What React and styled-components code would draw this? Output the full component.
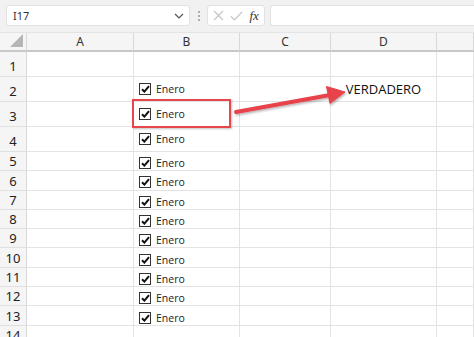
import React from "react";
import styled, { createGlobalStyle } from "styled-components";

const GlobalStyle = createGlobalStyle`
  html, body {
    margin: 0;
    padding: 0;
    background: #fff;
    overflow: hidden;
  }
  body {
    font-family: "Noto Sans", "Liberation Sans", sans-serif;
  }
`;

const Page = styled.div`
  width: 474px;
  height: 337px;
  overflow: hidden;
  position: relative;
  background: #fff;
`;

const Toolbar = styled.div`
  height: 32px;
  box-sizing: border-box;
  padding: 5px 0 6px 6px;
  display: flex;
  align-items: stretch;
  background: #f1f1f1;
`;

const NameBox = styled.div`
  width: 184px;
  box-sizing: border-box;
  background: #fff;
  border: 1px solid #e2e2e2;
  border-radius: 3px;
  display: flex;
  align-items: center;
  justify-content: space-between;
  padding: 0 5px 0 6px;
  font-size: 11px;
  color: #333;
`;

const Dots = styled.div`
  width: 17px;
  display: flex;
  flex-direction: column;
  align-items: center;
  justify-content: center;
  gap: 2px;
  span {
    width: 2px;
    height: 2px;
    background: #999;
    border-radius: 1px;
  }
`;

const FxBox = styled.div`
  width: 58px;
  box-sizing: border-box;
  background: #fff;
  border: 1px solid #e2e2e2;
  border-radius: 3px;
  display: flex;
  align-items: center;
  justify-content: space-around;
  padding: 0 2px;
`;

const FxLabel = styled.span`
  font-family: "Liberation Serif", serif;
  font-style: italic;
  font-size: 13px;
  color: #333;
`;

const FormulaInput = styled.div`
  flex: 1;
  margin-left: 5px;
  background: #fff;
  border: 1px solid #e2e2e2;
  border-right: none;
  border-radius: 3px 0 0 3px;
`;

const Sheet = styled.div`
  display: grid;
  grid-template-columns: 27px 107px 106px 91px 106px 1fr;
  grid-template-rows: 19px repeat(4, 25px) repeat(10, 19.3px);
  border-top: 1px solid #e4e4e4;
`;

const Corner = styled.div`
  background: #f5f5f5;
  border-right: 1px solid #d8d8d8;
  border-bottom: 2px solid #c8c8c8;
  position: relative;
  svg {
    position: absolute;
    right: 3px;
    bottom: 3px;
  }
`;

const ColHead = styled.div`
  background: #f5f5f5;
  border-right: 1px solid #d8d8d8;
  border-bottom: 2px solid #c8c8c8;
  display: flex;
  align-items: center;
  justify-content: center;
  font-size: 12px;
  color: #333;
`;

const RowHead = styled.div`
  background: #f5f5f5;
  border-right: 1px solid #d8d8d8;
  border-bottom: 1px solid #e0e0e0;
  display: flex;
  align-items: flex-end;
  justify-content: center;
  padding-bottom: ${(p) => (p.$tall ? "1px" : "0")};
  font-size: 13px;
  line-height: 18px;
  color: #222;
`;

const Cell = styled.div`
  border-right: 1px solid #e3e3e3;
  border-bottom: 1px solid #e3e3e3;
  display: flex;
  align-items: ${(p) => (p.$bottom ? "flex-end" : "center")};
  justify-content: ${(p) => (p.$center ? "center" : "flex-start")};
  padding-left: ${(p) => (p.$center ? "0" : "5px")};
  padding-bottom: ${(p) => (p.$bottom ? "3px" : "0")};
  padding-top: ${(p) => p.$drop || 0}px;
  box-sizing: border-box;
  font-family: "Open Sans", "Noto Sans", sans-serif;
  font-size: 13px;
  color: #111;
  min-width: 0;
  white-space: nowrap;
`;

const CheckItem = styled.div`
  display: flex;
  align-items: center;
  gap: 5px;
  font-family: "Open Sans", "Noto Sans", sans-serif;
  font-size: 10.5px;
  color: #222;
`;

const Box = styled.span`
  width: 12px;
  height: 12px;
  box-sizing: border-box;
  border: 1px solid #333;
  background: #fff;
  display: flex;
  align-items: center;
  justify-content: center;
`;

const Highlight = styled.div`
  position: absolute;
  left: 132px;
  top: 99px;
  width: 99px;
  height: 29px;
  box-sizing: border-box;
  border: 2px solid #e5474d;
  box-shadow: 1px 1px 2px rgba(0, 0, 0, 0.25);
  pointer-events: none;
`;

const ArrowLayer = styled.svg`
  position: absolute;
  left: 0;
  top: 0;
  pointer-events: none;
`;

const Check = () => (
  <svg width="9" height="8" viewBox="0 0 9 8">
    <path d="M1 4.2 L3.4 6.6 L8 1.2" fill="none" stroke="#111" strokeWidth="2" />
  </svg>
);

const Checked = () => (
  <CheckItem>
    <Box>
      <Check />
    </Box>
    Enero
  </CheckItem>
);

const cols = ["A", "B", "C", "D", ""];

export default function App() {
  const rows = Array.from({ length: 14 }, (_, i) => i + 1);
  return (
    <Page>
      <GlobalStyle />
      <Toolbar>
        <NameBox>
          <span>I17</span>
          <svg width="10" height="6" viewBox="0 0 10 6">
            <path d="M1 1 L5 5 L9 1" fill="none" stroke="#555" strokeWidth="1.2" />
          </svg>
        </NameBox>
        <Dots>
          <span />
          <span />
          <span />
        </Dots>
        <FxBox>
          <svg width="11" height="11" viewBox="0 0 11 11">
            <path d="M1 1 L10 10 M10 1 L1 10" stroke="#c4c4c4" strokeWidth="1.1" />
          </svg>
          <svg width="13" height="10" viewBox="0 0 13 10">
            <path d="M1 5.5 L4.5 9 L12 1" fill="none" stroke="#c4c4c4" strokeWidth="1.1" />
          </svg>
          <FxLabel>fx</FxLabel>
        </FxBox>
        <FormulaInput />
      </Toolbar>
      <Sheet>
        <Corner>
          <svg width="13" height="13" viewBox="0 0 13 13">
            <path d="M13 0 L13 13 L0 13 Z" fill="#b5b5b5" />
          </svg>
        </Corner>
        {cols.map((c, i) => (
          <ColHead key={i}>{c}</ColHead>
        ))}
        {rows.map((r) => (
          <React.Fragment key={r}>
            <RowHead $tall={r <= 4}>{r}</RowHead>
            <Cell />
            <Cell $drop={r >= 5 ? 4 : 0}>
              {r >= 2 && r <= 13 ? <Checked /> : null}
            </Cell>
            <Cell />
            <Cell $center $bottom={r === 2}>
              {r === 2 ? "VERDADERO" : null}
            </Cell>
            <Cell />
          </React.Fragment>
        ))}
      </Sheet>
      <Highlight />
      <ArrowLayer width="474" height="337" viewBox="0 0 474 337">
        <defs>
          <filter id="sh" x="-10%" y="-30%" width="120%" height="160%">
            <feDropShadow dx="1" dy="1.5" stdDeviation="1" floodColor="#000" floodOpacity="0.3" />
          </filter>
        </defs>
        <g filter="url(#sh)" fill="#e8434b" stroke="#e8434b">
          <line x1="236" y1="112" x2="330" y2="95" strokeWidth="4" strokeLinecap="round" />
          <polygon points="345,92 326.5,86.5 330,103.5" strokeWidth="1" strokeLinejoin="round" />
        </g>
      </ArrowLayer>
    </Page>
  );
}
